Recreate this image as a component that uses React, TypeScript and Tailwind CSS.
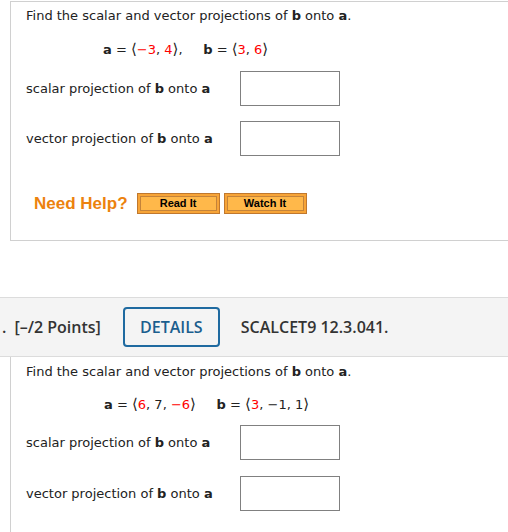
import React from "react";

const V = { fontFamily: '"DejaVu Sans", Verdana, sans-serif' };
const A = { fontFamily: '"Liberation Sans", Arial, sans-serif' };
const O = { fontFamily: '"Open Sans", sans-serif' };

function Input() {
  return <div className="w-[100px] h-[35px] border border-[#808080] bg-white" />;
}

function Row({ children }: { children: React.ReactNode }) {
  return (
    <div className="flex items-center">
      <div className="w-[214px] text-[13px] leading-[16px] text-[#222]">{children}</div>
      <Input />
    </div>
  );
}

function OrangeBtn({ label }: { label: string }) {
  return (
    <div className="w-[83px] h-[21px] border border-[#c0782e] bg-[#f7a437] p-[2px]">
      <div
        className="h-full border border-[#c4833a] bg-[#ffb84a] flex items-center justify-center text-[11px] font-bold text-black leading-none"
        style={A}
      >
        {label}
      </div>
    </div>
  );
}

const R = ({ children }: { children: React.ReactNode }) => <span className="text-[#ff0000]">{children}</span>;
const L = () => <span className="text-[15px] leading-[10px]">⟨</span>;
const G = () => <span className="text-[15px] leading-[10px]">⟩</span>;

export default function App() {
  return (
    <div className="w-[508px] h-[532px] bg-white overflow-hidden text-[#222]" style={V}>
      <div className="ml-[10px] mt-px border-l border-t border-b border-[#d0d0d0] pl-[15px] pt-[6px] pb-[26px]">
        <div className="text-[13px] leading-[16px]">
          Find the scalar and vector projections of <b>b</b> onto <b>a</b>.
        </div>
        <div className="mt-[18px] h-[16px] pl-[77px] text-[13px] leading-[16px] whitespace-pre">
          <b>a</b> = <L /><R>−3</R>, <R>4</R><G />,     <b>b</b> = <L /><R>3</R>, <R>6</R><G />
        </div>
        <div className="mt-[13px] flex flex-col gap-[15px]">
          <Row>
            scalar projection of <b>b</b> onto <b>a</b>
          </Row>
          <Row>
            vector projection of <b>b</b> onto <b>a</b>
          </Row>
        </div>
        <div className="mt-[37px] flex items-center">
          <span className="ml-[8px] text-[17px] font-bold text-[#ec820e] leading-none" style={A}>
            Need Help?
          </span>
          <div className="ml-[9px] flex gap-[4px]">
            <OrangeBtn label="Read It" />
            <OrangeBtn label="Watch It" />
          </div>
        </div>
      </div>

      <div className="mt-[56px] border-t border-b border-[#dcdcdc] bg-[#f4f4f4] h-[60px] flex items-center text-[#333]" style={O}>
        <span className="ml-[2px] text-[16px] font-semibold">.</span>
        <span className="ml-[8px] text-[16px] font-semibold">[–/2 Points]</span>
        <div className="ml-[22px] w-[97px] h-[40px] border-2 border-[#1f6aa0] rounded-[4px] flex items-center justify-center text-[16px] font-semibold text-[#1b5e8e]">
          DETAILS
        </div>
        <span className="ml-[21px] text-[16px] font-semibold">SCALCET9 12.3.041.</span>
      </div>

      <div className="ml-[10px] border-l border-[#d0d0d0] pl-[15px] pt-[7px] pb-[30px]">
        <div className="text-[13px] leading-[16px]">
          Find the scalar and vector projections of <b>b</b> onto <b>a</b>.
        </div>
        <div className="mt-[17px] h-[16px] pl-[78px] text-[13px] leading-[16px] whitespace-pre">
          <b>a</b> = <L /><R>6</R>, 7, <R>−6</R><G />     <b>b</b> = <L /><R>3</R>, −1, 1<G />
        </div>
        <div className="mt-[12px] flex flex-col gap-[16px]">
          <Row>
            scalar projection of <b>b</b> onto <b>a</b>
          </Row>
          <Row>
            vector projection of <b>b</b> onto <b>a</b>
          </Row>
        </div>
      </div>
    </div>
  );
}
